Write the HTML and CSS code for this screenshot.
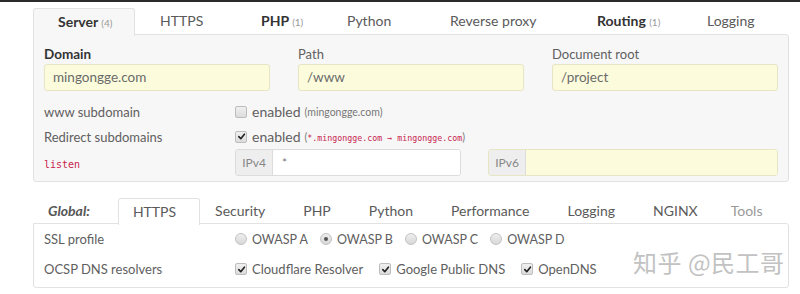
FILE: index.html
```html
<!DOCTYPE html>
<html>
<head>
<meta charset="utf-8">
<link rel="stylesheet" href="styles.css">
</head>
<body>
<div class="topbar"></div>
<div class="page">
  <section class="server">
    <nav class="tabs">
      <div class="tab active strong">Server <span class="count">(4)</span></div>
      <div class="tab">HTTPS</div>
      <div class="tab strong">PHP <span class="count">(1)</span></div>
      <div class="tab">Python</div>
      <div class="tab">Reverse proxy</div>
      <div class="tab strong">Routing <span class="count">(1)</span></div>
      <div class="tab">Logging</div>
    </nav>
    <div class="panel">
      <div class="fields">
        <div class="field">
          <div class="flabel strong">Domain</div>
          <div class="input yellow">mingongge.com</div>
        </div>
        <div class="field">
          <div class="flabel">Path</div>
          <div class="input yellow">/www</div>
        </div>
        <div class="field">
          <div class="flabel">Document root</div>
          <div class="input yellow">/project</div>
        </div>
      </div>
      <div class="row">
        <div class="rlabel">www subdomain</div>
        <div class="opts">
          <span class="opt"><span class="cb"></span><span class="otext">enabled</span> <span class="hint">(mingongge.com)</span></span>
        </div>
      </div>
      <div class="row">
        <div class="rlabel">Redirect subdomains</div>
        <div class="opts">
          <span class="opt"><span class="cb checked"><svg viewBox="0 0 10 10"><path d="M2 5.2 L4.2 7.4 L8.2 2.4" /></svg></span><span class="otext">enabled</span> <span class="hint">(<code>*.mingongge.com → mingongge.com</code>)</span></span>
        </div>
      </div>
      <div class="row listen">
        <div class="rlabel"><code class="code">listen</code></div>
        <div class="groups">
          <div class="group ipv4"><span class="addon">IPv4</span><span class="gin white">*</span></div>
          <div class="group ipv6"><span class="addon">IPv6</span><span class="gin yellow"></span></div>
        </div>
      </div>
    </div>
  </section>

  <section class="global">
    <nav class="tabs2">
      <div class="tab2 glabel">Global:</div>
      <div class="tab2 active">HTTPS</div>
      <div class="tab2">Security</div>
      <div class="tab2">PHP</div>
      <div class="tab2">Python</div>
      <div class="tab2">Performance</div>
      <div class="tab2">Logging</div>
      <div class="tab2">NGINX</div>
      <div class="tab2 muted">Tools</div>
    </nav>
    <div class="panel2">
      <div class="row2">
        <div class="rlabel">SSL profile</div>
        <div class="opts radios">
          <span class="opt"><span class="radio"></span><span class="otext">OWASP A</span></span>
          <span class="opt"><span class="radio on"></span><span class="otext">OWASP B</span></span>
          <span class="opt"><span class="radio"></span><span class="otext">OWASP C</span></span>
          <span class="opt"><span class="radio"></span><span class="otext">OWASP D</span></span>
        </div>
      </div>
      <div class="row2">
        <div class="rlabel">OCSP DNS resolvers</div>
        <div class="opts">
          <span class="opt"><span class="cb checked"><svg viewBox="0 0 10 10"><path d="M2 5.2 L4.2 7.4 L8.2 2.4" /></svg></span><span class="otext">Cloudflare Resolver</span></span>
          <span class="opt"><span class="cb checked"><svg viewBox="0 0 10 10"><path d="M2 5.2 L4.2 7.4 L8.2 2.4" /></svg></span><span class="otext">Google Public DNS</span></span>
          <span class="opt"><span class="cb checked"><svg viewBox="0 0 10 10"><path d="M2 5.2 L4.2 7.4 L8.2 2.4" /></svg></span><span class="otext">OpenDNS</span></span>
        </div>
      </div>
    </div>
  </section>
</div>
<div class="watermark">知乎 @民工哥</div>
</body>
</html>
```
FILE: styles.css
```css
html, body {
  margin: 0;
  padding: 0;
  background: #ffffff;
}
body {
  font-family: "Lato", "Noto Sans", sans-serif;
  font-size: 14px;
  color: #555;
  position: relative;
  width: 800px;
  height: 294px;
  overflow: hidden;
}
.topbar {
  height: 2px;
  background: #2a2a2a;
}
.page {
  padding: 0 11px 0 33px;
}
.server {
  margin-top: 6px;
}
.tabs {
  display: grid;
  grid-template-columns: 102px 101px 86px 103px 147px 110px 1fr;
  height: 27px;
}
.tab {
  padding-left: 25px;
  line-height: 26px;
  white-space: nowrap;
  color: #5a5a5a;
}
.tab.strong {
  font-weight: 700;
  color: #333;
}
.tab.active {
  background: #f8f7f7;
  border: 1px solid #e2e2e2;
  border-bottom: none;
  border-radius: 3px 3px 0 0;
  padding-left: 24px;
  position: relative;
  z-index: 1;
  height: 27px;
}
.count {
  font-weight: 400;
  font-size: 10px;
  color: #999;
}
.panel {
  background: #f8f7f7;
  border: 1px solid #e2e2e2;
  border-radius: 0 3px 3px 3px;
  padding: 10px 10px 4px 10px;
  margin-top: -1px;
  height: 132px;
}
.fields {
  display: grid;
  grid-template-columns: 226px 226px 226px;
  column-gap: 28px;
}
.flabel {
  line-height: 18px;
  font-size: 13px;
  color: #606060;
}
.flabel.strong {
  font-weight: 700;
  font-size: 13.5px;
  color: #333;
}
.input {
  margin-top: 1px;
  height: 25px;
  line-height: 25px;
  border: 1px solid #e6e6c4;
  border-radius: 3px;
  padding: 0 8px;
  font-size: 13.5px;
  color: #6a6a6a;
}
.yellow {
  background: #fcfcdc;
}
.white {
  background: #ffffff;
}
.row {
  display: grid;
  grid-template-columns: 191px 1fr;
  align-items: center;
  height: 25px;
}
.fields + .row {
  margin-top: 8px;
}
.row.listen {
  height: 27px;
}
.rlabel {
  font-size: 13px;
  color: #606060;
}
.code {
  font-family: "DejaVu Sans Mono", "Liberation Mono", monospace;
  font-size: 10px;
  color: #c7254e;
}
.opts {
  display: flex;
  align-items: center;
  gap: 16px;
  white-space: nowrap;
}
.opts.radios {
  gap: 12px;
}
.opt {
  display: inline-flex;
  align-items: center;
}
.otext {
  margin-left: 5px;
  font-size: 13px;
  color: #606060;
}
.radios .otext {
  font-size: 12.5px;
}
.row .otext {
  font-size: 14px;
}
.hint {
  font-size: 10.5px;
  color: #777;
  margin-left: 4px;
}
.hint code {
  font-family: "DejaVu Sans Mono", "Liberation Mono", monospace;
  font-size: 8.3px;
  color: #c7254e;
}
.cb {
  display: inline-flex;
  align-items: center;
  justify-content: center;
  width: 10px;
  height: 10px;
  border: 1px solid #bdbdbd;
  border-radius: 2px;
  background: linear-gradient(#f0f0f0, #dcdcdc);
}
.cb svg {
  width: 9px;
  height: 9px;
}
.cb svg path {
  fill: none;
  stroke: #222;
  stroke-width: 1.8;
  stroke-linecap: round;
  stroke-linejoin: round;
}
.radio {
  display: inline-flex;
  align-items: center;
  justify-content: center;
  width: 10px;
  height: 10px;
  border: 1px solid #c2c2c2;
  border-radius: 50%;
  background: linear-gradient(#eeeeee, #d8d8d8);
}
.radio.on::after {
  content: "";
  width: 4px;
  height: 4px;
  border-radius: 50%;
  background: #555;
}
.groups {
  display: flex;
  gap: 27px;
}
.group {
  display: flex;
  height: 27px;
  box-sizing: border-box;
  border: 1px solid #dcdcdc;
  border-radius: 3px;
  overflow: hidden;
}
.ipv4 {
  width: 226px;
}
.ipv6 {
  flex: 1;
  border-color: #e6e6c4;
}
.addon {
  width: 36px;
  background: #eeeeee;
  border-right: 1px solid #dcdcdc;
  color: #888;
  font-size: 12px;
  line-height: 25px;
  text-align: center;
}
.gin {
  flex: 1;
  padding: 0 9px;
  line-height: 25px;
  color: #777;
  font-size: 12px;
}
.global {
  margin-top: 16px;
}
.tabs2 {
  display: flex;
  height: 26px;
}
.tab2 {
  padding: 0 23px 0 15px;
  line-height: 26px;
  color: #5a5a5a;
  white-space: nowrap;
}
.tab2.glabel {
  font-weight: 700;
  font-style: italic;
  color: #555;
  padding-right: 28px;
}
.tab2.active {
  background: #ffffff;
  border: 1px solid #e2e2e2;
  border-bottom: none;
  border-radius: 3px 3px 0 0;
  padding-left: 14px;
  padding-right: 23px;
  position: relative;
  z-index: 1;
  height: 26px;
}
.tab2.muted {
  color: #999;
  padding-left: 10px;
}
.panel2 {
  border: 1px solid #e2e2e2;
  border-radius: 0 3px 3px 3px;
  background: #ffffff;
  padding: 0 10px 3px 10px;
  margin-top: -1px;
  position: relative;
}
.row2 {
  display: grid;
  grid-template-columns: 191px 1fr;
  align-items: center;
  height: 30px;
}
.watermark {
  position: absolute;
  left: 633px;
  top: 244px;
  font-family: "Noto Sans CJK SC", sans-serif;
  font-size: 24px;
  color: #c2c2c2;
  letter-spacing: 0.5px;
  z-index: 5;
}
```
